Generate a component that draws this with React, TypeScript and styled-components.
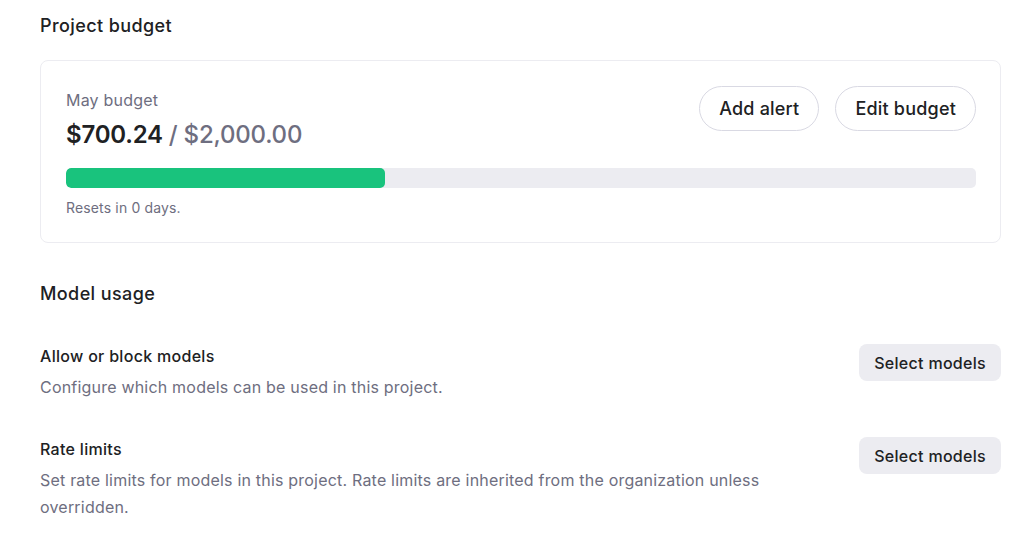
import React from 'react'
import styled, { createGlobalStyle } from 'styled-components'

const GlobalStyle = createGlobalStyle`
  body {
    margin: 0;
    background: #ffffff;
    font-family: Inter, "Noto Sans", "Liberation Sans", sans-serif;
    color: #202123;
    -webkit-font-smoothing: antialiased;
  }
`

const Page = styled.div`
  padding: 12px 23px 0 40px;
`

const SectionTitle = styled.h2<{ $top?: number }>`
  margin: ${({ $top }) => $top ?? 0}px 0 0;
  font-size: 18px;
  line-height: 28px;
  font-weight: 500;
  letter-spacing: 0.4px;
  color: #202123;
`

const Card = styled.div`
  margin-top: 20px;
  border: 1px solid #ececf1;
  border-radius: 8px;
  padding: 25px 24px 24px 25px;
`

const CardHeader = styled.div`
  display: flex;
  justify-content: space-between;
  align-items: flex-start;
`

const BudgetLabel = styled.div`
  margin-top: 2px;
  font-size: 16px;
  line-height: 24px;
  letter-spacing: 0.2px;
  color: #6e6e80;
`

const Amount = styled.div`
  margin-top: 7px;
  font-size: 24px;
  line-height: 32px;
  font-weight: 600;
  color: #202123;
  letter-spacing: -0.2px;
`

const AmountTotal = styled.span`
  font-weight: 500;
  color: #6e6e80;
`

const Actions = styled.div`
  display: flex;
  gap: 16px;
`

const PillButton = styled.button`
  height: 45px;
  padding: 0 19px;
  border: 1px solid #d9d9e3;
  border-radius: 999px;
  background: #ffffff;
  font-family: inherit;
  font-size: 18px;
  font-weight: 500;
  letter-spacing: 0.2px;
  color: #202123;
  cursor: pointer;
`

const Track = styled.div`
  margin-top: 17px;
  height: 20px;
  border-radius: 5px;
  background: #ececf1;
  overflow: hidden;
`

const Fill = styled.div`
  height: 100%;
  border-radius: 5px;
  background: #19c37d;
`

const ResetNote = styled.div`
  margin-top: 10px;
  font-size: 14px;
  line-height: 20px;
  letter-spacing: 0.15px;
  color: #6e6e80;
`

const SettingRow = styled.div`
  display: flex;
  justify-content: space-between;
  align-items: flex-start;
  gap: 24px;
  margin-top: 36px;
`

const SettingText = styled.div`
  flex: 1;
  max-width: 760px;
`

const SettingName = styled.div`
  font-size: 16px;
  line-height: 24px;
  font-weight: 500;
  letter-spacing: 0.3px;
  color: #202123;
`

const SettingDesc = styled.div`
  margin-top: 6px;
  font-size: 16px;
  line-height: 27px;
  letter-spacing: 0.2px;
  color: #6e6e80;
`

const SoftButton = styled.button`
  flex-shrink: 0;
  height: 37px;
  padding: 0 15px;
  border: none;
  border-radius: 8px;
  background: #ececf1;
  font-family: inherit;
  font-size: 16px;
  font-weight: 500;
  letter-spacing: 0.3px;
  color: #202123;
  cursor: pointer;
`

const spent = 700.24
const limit = 2000

const settings = [
  {
    name: 'Allow or block models',
    desc: 'Configure which models can be used in this project.',
  },
  {
    name: 'Rate limits',
    desc: 'Set rate limits for models in this project. Rate limits are inherited from the organization unless overridden.',
  },
]

const App = () => {
  const pct = Math.min(100, (spent / limit) * 100)

  return (
    <>
      <GlobalStyle />
      <Page>
        <SectionTitle>Project budget</SectionTitle>
        <Card>
          <CardHeader>
            <div>
              <BudgetLabel>May budget</BudgetLabel>
              <Amount>
                $700.24 <AmountTotal>/ $2,000.00</AmountTotal>
              </Amount>
            </div>
            <Actions>
              <PillButton>Add alert</PillButton>
              <PillButton>Edit budget</PillButton>
            </Actions>
          </CardHeader>
          <Track>
            <Fill style={{ width: `${pct}%` }} />
          </Track>
          <ResetNote>Resets in 0 days.</ResetNote>
        </Card>

        <SectionTitle $top={37}>Model usage</SectionTitle>
        {settings.map((s) => (
          <SettingRow key={s.name}>
            <SettingText>
              <SettingName>{s.name}</SettingName>
              <SettingDesc>{s.desc}</SettingDesc>
            </SettingText>
            <SoftButton>Select models</SoftButton>
          </SettingRow>
        ))}
      </Page>
    </>
  )
}

export default App
